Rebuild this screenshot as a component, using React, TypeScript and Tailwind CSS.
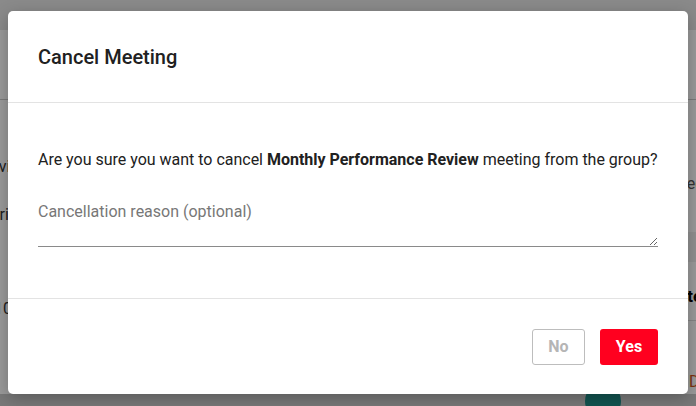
export default function App() {
  return (
    <div className="relative h-[406px] w-[696px] overflow-hidden bg-white font-['Roboto',sans-serif]">
      {/* page behind the dialog */}
      <div className="flex h-full flex-col">
        <div className="h-[30px] bg-[#e6e6e6]" />
        <div className="flex flex-1">
          <div className="flex w-[560px] shrink-0 flex-col border-r border-[#ddd]">
            <div className="h-[70px] border-b border-[#ccc]" />
            <div className="flex flex-col gap-[24px] pt-[55px] text-[16px] text-[#333]">
              <span className="-ml-[25px]">Preview</span>
              <span className="-ml-[19px]">Periodic</span>
            </div>
            <div className="mt-[70px] -ml-[6px] text-[16px] text-[#333]">10</div>
          </div>
          <div className="flex min-w-0 flex-1 flex-col whitespace-nowrap">
            <div className="h-[70px] border-b border-[#ccc]" />
            <div className="pt-[72px] pl-[117px] text-[16px] text-[#555]">Received</div>
            <div className="mt-[36px] h-[30px] bg-[#f0f0f0]" />
            <div className="pt-[22px] pl-[109px] text-[17px] font-bold text-black">Late</div>
            <div className="mt-[10px] border-t border-[#ddd]" />
            <div className="relative pt-[49px] pl-[129px] text-[16px] text-[#d0541b]">
              Due
              <div className="absolute left-[25px] top-[62px] h-[36px] w-[36px] rounded-full bg-[#1f8a86]" />
            </div>
          </div>
        </div>
        <div className="h-[12px] bg-[#c8c8c8]" />
      </div>

      {/* overlay */}
      <div className="absolute inset-0 bg-black/40" />

      {/* dialog */}
      <div className="absolute left-[8px] top-[11px] flex h-[383px] w-[680px] flex-col rounded-[5px] bg-white shadow-[0_4px_16px_rgba(0,0,0,0.25)]">
        <div className="flex h-[92px] items-center border-b border-[#e3e3e3] px-[30px]">
          <h2 className="text-[20px] font-medium text-[#212121]">Cancel Meeting</h2>
        </div>
        <div className="flex flex-1 flex-col px-[30px] pt-[45px]">
          <p className="whitespace-nowrap text-[16px] leading-[24px] tracking-[-0.01px] text-[#212121]">
            Are you sure you want to cancel <span className="font-bold">Monthly Performance Review</span> meeting from the group?
          </p>
          <textarea
            placeholder="Cancellation reason (optional)"
            className="mt-[28px] h-[47px] w-full resize-y border-b border-[#8a8a8a] bg-transparent text-[16px] leading-[24px] text-[#212121] outline-none placeholder:text-[#777]"
          />
        </div>
        <div className="flex h-[96px] items-start justify-end gap-[15px] border-t border-[#e3e3e3] px-[30px] pt-[30px]">
          <button className="h-[36px] w-[53px] rounded-[3px] border border-[#bdbdbd] text-[16px] font-bold text-[#b5b5b5]">
            No
          </button>
          <button className="h-[36px] w-[58px] rounded-[3px] bg-[#ff001f] text-[16px] font-bold text-white">
            Yes
          </button>
        </div>
      </div>
    </div>
  );
}
